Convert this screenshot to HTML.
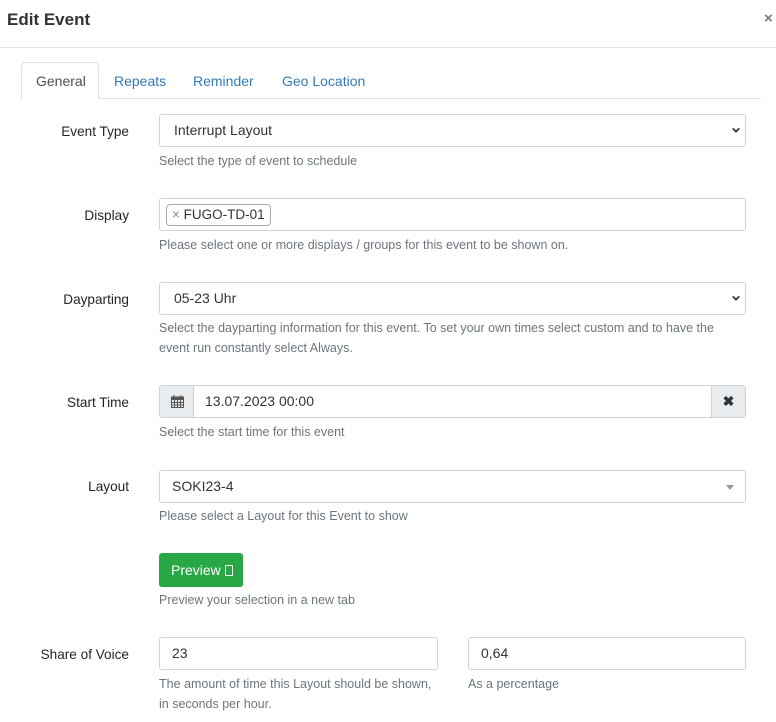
<!DOCTYPE html>
<html><head><style>
*{box-sizing:border-box;margin:0;padding:0}
body{width:776px;height:722px;background:#fff;font-family:"Liberation Sans",sans-serif;color:#212529;position:relative;overflow:hidden;font-size:14px}
.a{position:absolute}
.lbl{position:absolute;right:647px;font-size:13.6px;color:#212529;white-space:nowrap}
.inp{position:absolute;border:1px solid #ced4da;border-radius:3px;background:#fff;height:33px;font-size:14px;padding-left:14px;line-height:31px;color:#333}
.help{position:absolute;left:159px;font-size:12.5px;color:#6c757d;line-height:20px}
.chev{position:absolute;right:5px;top:11px;width:8px;height:8px}
.tab{position:absolute;top:73px;font-size:14px;color:#337ab7}
</style></head><body>
<div class="a" style="left:7px;top:10px;font-size:17px;font-weight:bold;color:#333">Edit Event</div>
<div class="a" style="left:764px;top:10px;font-size:15px;font-weight:bold;color:#777">×</div>
<div class="a" style="left:0;top:47px;width:776px;height:1px;background:#e5e5e5"></div>

<div class="a" style="left:21px;top:98px;width:740px;height:1px;background:#dee2e6"></div>
<div class="a" style="left:21px;top:62px;width:78px;height:37px;border:1px solid #dee2e6;border-bottom:none;border-radius:4px 4px 0 0;background:#fff"></div>
<div class="tab" style="left:36px;color:#495057">General</div>
<div class="tab" style="left:114px">Repeats</div>
<div class="tab" style="left:193px">Reminder</div>
<div class="tab" style="left:282px">Geo Location</div>

<div class="lbl" style="top:124px">Event Type</div>
<div class="inp" style="left:159px;top:114px;width:587px">Interrupt Layout<svg class="chev" viewBox="0 0 10 10"><path d="M1 3l4 4 4-4" stroke="#333" stroke-width="2.2" fill="none"/></svg></div>
<div class="help" style="top:151px">Select the type of event to schedule</div>

<div class="lbl" style="top:208px">Display</div>
<div class="inp" style="left:159px;top:198px;width:587px;padding-left:6px"><span style="display:inline-block;border:1px solid #aaa;border-radius:4px;background:#fff;line-height:20px;padding:0 5px;font-size:13.5px;vertical-align:top;margin-top:5px"><span style="color:#888">×</span> FUGO-TD-01</span></div>
<div class="help" style="top:235px">Please select one or more displays / groups for this event to be shown on.</div>

<div class="lbl" style="top:292px">Dayparting</div>
<div class="inp" style="left:159px;top:282px;width:587px">05-23 Uhr<svg class="chev" viewBox="0 0 10 10"><path d="M1 3l4 4 4-4" stroke="#333" stroke-width="2.2" fill="none"/></svg></div>
<div class="help" style="top:318px;width:580px">Select the dayparting information for this event. To set your own times select custom and to have the event run constantly select Always.</div>

<div class="lbl" style="top:395px">Start Time</div>
<div class="inp" style="left:159px;top:385px;width:587px;padding-left:0;background:#fff">
<div class="a" style="left:0;top:0;width:34px;height:31px;background:#e9ecef;border-right:1px solid #ced4da"><svg class="a" style="left:11px;top:9px" width="13" height="13" viewBox="0 0 13 13"><rect x="0.5" y="2" width="12" height="10.5" fill="none" stroke="#555"/><rect x="0.5" y="2" width="12" height="3" fill="#555"/><path d="M3 0v3M10 0v3M0 7.5h13M0 10h13M3.5 5v8M6.5 5v8M9.5 5v8" stroke="#555" stroke-width="1"/></svg></div>
<span class="a" style="left:45px;top:0">13.07.2023 00:00</span>
<div class="a" style="right:0;top:0;width:34px;height:31px;background:#e9ecef;border-left:1px solid #ced4da;text-align:center;font-weight:bold;font-size:14px;color:#333">✖</div>
</div>
<div class="help" style="top:422px">Select the start time for this event</div>

<div class="lbl" style="top:479px">Layout</div>
<div class="inp" style="left:159px;top:470px;width:587px;padding-left:12px">SOKI23-4<div class="a" style="right:11px;top:14px;border:4px solid transparent;border-top:5px solid #999;border-bottom:0"></div></div>
<div class="help" style="top:506px">Please select a Layout for this Event to show</div>

<div class="a" style="left:159px;top:553px;width:84px;height:34px;background:#28a745;border-radius:3px;color:#fff;font-size:14px;line-height:34px;padding-left:12px">Preview <span style="display:inline-block;width:8px;height:11px;border:1.5px solid #fff;border-radius:1px;vertical-align:-1px"></span></div>
<div class="help" style="top:590px">Preview your selection in a new tab</div>

<div class="lbl" style="top:647px">Share of Voice</div>
<div class="inp" style="left:159px;top:637px;width:279px;padding-left:12px">23</div>
<div class="inp" style="left:468px;top:637px;width:278px;padding-left:12px">0,64</div>
<div class="help" style="top:674px;width:278px">The amount of time this Layout should be shown, in seconds per hour.</div>
<div class="help" style="top:674px;left:468px">As a percentage</div>
</body></html>
